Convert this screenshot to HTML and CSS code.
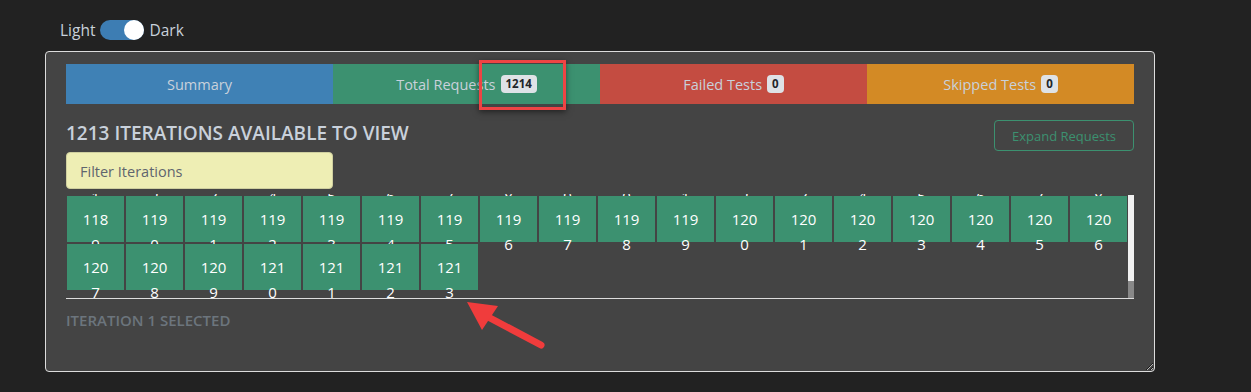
FILE: index.html
```html
<!DOCTYPE html>
<html lang="en">
<head>
    <meta charset="UTF-8">
    <meta name="viewport" content="width=device-width, initial-scale=1.0">
    <title>Iterations</title>
    <link rel="stylesheet" href="styles.css">
</head>
<body>

    <!-- theme switch -->
    <div class="theme-toggle">
        <span>Light</span>
        <span class="switch"><span class="knob"></span></span>
        <span>Dark</span>
    </div>

    <div class="card">
        <div class="tabs">
            <div class="tab summary">Summary</div>
            <div class="tab total">Total Requests <span class="badge">1214</span></div>
            <div class="tab failed">Failed Tests <span class="badge">0</span></div>
            <div class="tab skipped">Skipped Tests <span class="badge">0</span></div>
        </div>

        <div class="list-header">
            <h2 class="count">1213 ITERATIONS AVAILABLE TO VIEW</h2>
            <button class="expand-btn">Expand Requests</button>
        </div>

        <input class="filter" type="text" placeholder="Filter Iterations">

        <div class="iteration-list">
            <div id="iterations" class="iterations">
                <div id="iteration-grid" class="iteration-grid"></div>
            </div>
            <div class="scrollbar"><div class="thumb"></div></div>
        </div>

        <div class="selected">ITERATION 1 SELECTED</div>
    </div>

    <!-- screenshot annotations -->
    <div class="callout-box"></div>
    <svg class="callout-arrow" width="110" height="65" viewBox="0 0 110 65">
        <line x1="40" y1="28" x2="91" y2="55" stroke="#f03c3c" stroke-width="7" stroke-linecap="round"/>
        <polygon points="17,12 48,16 32,40" fill="#f03c3c"/>
    </svg>

    <script>
        const list = document.getElementById("iterations");
        const grid = document.getElementById("iteration-grid");
        const total = 1213;

        for (let i = 1; i <= total; i++) {
            const tile = document.createElement("div");
            tile.className = "iteration";
            tile.textContent = i;
            grid.appendChild(tile);
        }

        // scroll so the row starting at 1189 sits at the top
        const target = grid.children[1188];
        list.scrollTop = target.getBoundingClientRect().top - list.getBoundingClientRect().top - 2;
    </script>

</body>
</html>
```

FILE: styles.css
```css
body {
    margin: 0;
    background-color: #222222;
    font-family: "Open Sans", "Noto Sans", sans-serif;
    color: #c9d1db;
}
.theme-toggle {
    display: flex;
    align-items: center;
    gap: 5px;
    height: 20px;
    padding: 20px 0 0 60px;
    font-size: 15.5px;
}
.switch {
    display: flex;
    justify-content: flex-end;
    width: 44px;
    height: 20px;
    border-radius: 10px;
    background-color: #3d7db3;
}
.knob {
    width: 20px;
    height: 20px;
    border-radius: 50%;
    background-color: #ffffff;
}
.card {
    box-sizing: border-box;
    width: 1110px;
    height: 321px;
    margin: 11px 0 0 45px;
    padding: 12px 20px;
    border: 1px solid #dddddd;
    border-radius: 4px;
    background-color: #444444;
    resize: both;
    overflow: hidden;
}
.tabs {
    display: flex;
    height: 40px;
}
.tab {
    flex: 1;
    display: flex;
    align-items: center;
    justify-content: center;
    gap: 5px;
    font-size: 14.5px;
    color: #c9d1db;
}
.tab.summary { background-color: #3f81b5; }
.tab.total { background-color: #3c9170; }
.tab.failed { background-color: #c44c41; }
.tab.skipped { background-color: #d38a25; }
.badge {
    padding: 2px 5px;
    border-radius: 4px;
    background-color: #dee2e6;
    color: #212529;
    font-size: 11.5px;
    font-weight: 700;
    line-height: 14px;
}
.list-header {
    display: flex;
    justify-content: space-between;
    align-items: flex-start;
    margin-top: 16px;
}
.count {
    margin: 1px 0 0;
    font-size: 19px;
    font-weight: 600;
    line-height: 24px;
    color: #c9d1db;
}
.expand-btn {
    width: 140px;
    height: 31px;
    padding: 0;
    border: 1px solid #3c9170;
    border-radius: 4px;
    background-color: transparent;
    color: #3c9170;
    font-family: inherit;
    font-size: 13px;
}
.filter {
    display: block;
    box-sizing: border-box;
    width: 267px;
    height: 37px;
    margin-top: 1px;
    padding: 2px 13px 0;
    border: 1px solid #cfcf9f;
    border-radius: 4px;
    background-color: #eeeeb4;
    font-family: inherit;
    font-size: 14.5px;
}
.filter::placeholder { color: #5f656e; }
.iteration-list {
    display: flex;
    height: 104px;
    margin-top: 5px;
    border-bottom: 1px solid #dddddd;
}
.iterations {
    flex: 1;
    overflow: hidden;
}
.scrollbar {
    display: flex;
    flex-direction: column;
    justify-content: flex-end;
    width: 6px;
    margin-top: 1px;
    background-color: #f1f1f1;
}
.thumb {
    height: 17px;
    background-color: #888888;
}
.iteration-grid {
    display: flex;
    flex-wrap: wrap;
    padding-bottom: 20px;
}
.iteration {
    box-sizing: border-box;
    width: 57px;
    height: 46px;
    margin: 1px;
    padding: 11px 12px 0;
    background-color: #3c9170;
    color: #ffffff;
    font-size: 15px;
    line-height: 25px;
    text-align: center;
    word-break: break-all;
}
.selected {
    margin-top: 10px;
    font-size: 15px;
    font-weight: 600;
    line-height: 22px;
    color: #6c757d;
}
.callout-box {
    position: absolute;
    left: 479px;
    top: 60px;
    width: 81px;
    height: 44px;
    border: 3px solid #ef4444;
    box-shadow: 0 2px 6px rgba(0, 0, 0, 0.5);
}
.callout-arrow {
    position: absolute;
    left: 450px;
    top: 290px;
}
```
